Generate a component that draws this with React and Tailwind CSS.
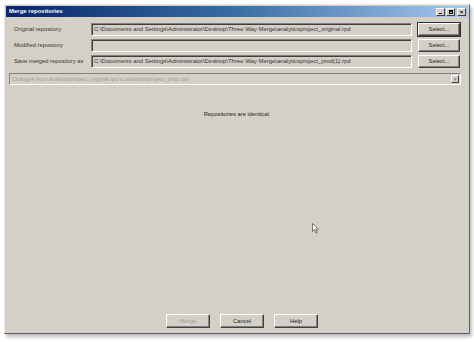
const font = { fontFamily: '"Liberation Sans", Arial, sans-serif' };

function Field({ value }) {
  return (
    <div className="flex h-[13px] flex-1 items-center border border-t-[#808080] border-l-[#808080] border-b-[#ffffff] border-r-[#ffffff] bg-[#d4d0c8] px-[2px] shadow-[inset_1px_1px_0_#404040] text-[5.95px] text-[#333]">
      {value}
    </div>
  );
}

function Button({ children, disabled, focused, className = '' }) {
  return (
    <div
      className={`flex items-center justify-center border border-t-[#ffffff] border-l-[#ffffff] border-b-[#404040] border-r-[#404040] bg-[#d4d0c8] shadow-[inset_-1px_-1px_0_#808080] text-[5.8px] ${
        disabled ? 'text-[#a09d96]' : 'text-[#222]'
      } ${focused ? 'outline outline-1 outline-[#303030]' : ''} ${className}`}
    >
      {children}
    </div>
  );
}

const rows = [
  { label: 'Original repository', value: 'C:\\Documents and Settings\\Administrator\\Desktop\\Three Way Merge\\analyticsproject_original.rpd', focused: true },
  { label: 'Modified repository', value: '' },
  { label: 'Save merged repository as', value: 'C:\\Documents and Settings\\Administrator\\Desktop\\Three Way Merge\\analyticsproject_prod(1).rpd' },
];

export default function App() {
  return (
    <div className="h-[342px] w-[474px] bg-white pl-[4px] pt-[4px]" style={font}>
      <div className="flex h-[330px] w-[466px] flex-col border border-t-[#e8e6e0] border-l-[#e8e6e0] border-b-[#606060] border-r-[#606060] bg-[#d4d0c8] p-[1px] shadow-[2px_3px_3px_rgba(0,0,0,0.25)]">
        <div className="flex h-[11px] items-center justify-between bg-gradient-to-r from-[#0a246a] via-[#3a6ea5] to-[#a6caf0] pl-[3px] pr-[2px]">
          <span className="text-[6px] font-bold text-white">Merge repositories</span>
          <div className="flex gap-[1px]">
            <div className="flex h-[8px] w-[9px] items-end justify-center border border-t-white border-l-white border-b-[#404040] border-r-[#404040] bg-[#d4d0c8] pb-[1px]">
              <div className="h-[1px] w-[3px] bg-black" />
            </div>
            <div className="flex h-[8px] w-[9px] items-center justify-center border border-t-white border-l-white border-b-[#404040] border-r-[#404040] bg-[#d4d0c8]">
              <div className="h-[4px] w-[4px] border border-t-2 border-black" />
            </div>
            <div className="ml-[1px] flex h-[8px] w-[9px] items-center justify-center border border-t-white border-l-white border-b-[#404040] border-r-[#404040] bg-[#d4d0c8] text-[6px] font-bold leading-none text-black">
              ×
            </div>
          </div>
        </div>

        <div className="flex flex-1 flex-col px-[3px] pt-[6px]">
          <div className="flex flex-col gap-[3px]">
            {rows.map((row) => (
              <div key={row.label} className="flex items-center">
                <span className="w-[82px] pl-[5px] text-[5.8px] text-[#333]">{row.label}</span>
                <Field value={row.value} />
                <Button focused={row.focused} className="ml-[6px] mr-[5px] h-[13px] w-[42px]">
                  Select...
                </Button>
              </div>
            ))}
          </div>

          <div className="mr-[4px] mt-[5px] flex h-[12px] items-center justify-between border border-t-[#808080] border-l-[#808080] border-b-white border-r-white bg-[#d4d0c8] pl-[2px] pr-[1px] text-[5.6px] text-[#a09d96]">
            <span>Changes from analyticsproject_original.rpd to analyticsproject_prod.rpd</span>
            <div className="flex h-[8px] w-[8px] items-center justify-center border border-t-white border-l-white border-b-[#404040] border-r-[#404040] text-[5px] leading-none text-[#808080]">
              ▾
            </div>
          </div>

          <div className="mt-[25px] text-center text-[5.8px] text-[#222]">Repositories are identical.</div>

          <div className="relative flex-1">
            <svg className="absolute left-[303px] top-[104px]" width="7" height="11" viewBox="0 0 7 11">
              <path d="M0.5 0.5 L0.5 8.5 L2.5 6.5 L4 10 L5.2 9.5 L3.8 6.2 L6.5 6.2 Z" fill="white" stroke="#555" strokeWidth="0.8" />
            </svg>
          </div>

          <div className="flex justify-center gap-[10px] pb-[4px] pl-[10px]">
            <Button disabled className="h-[14px] w-[44px]">Merge</Button>
            <Button className="h-[14px] w-[44px]">Cancel</Button>
            <Button className="h-[14px] w-[44px]">Help</Button>
          </div>
        </div>
      </div>
    </div>
  );
}
